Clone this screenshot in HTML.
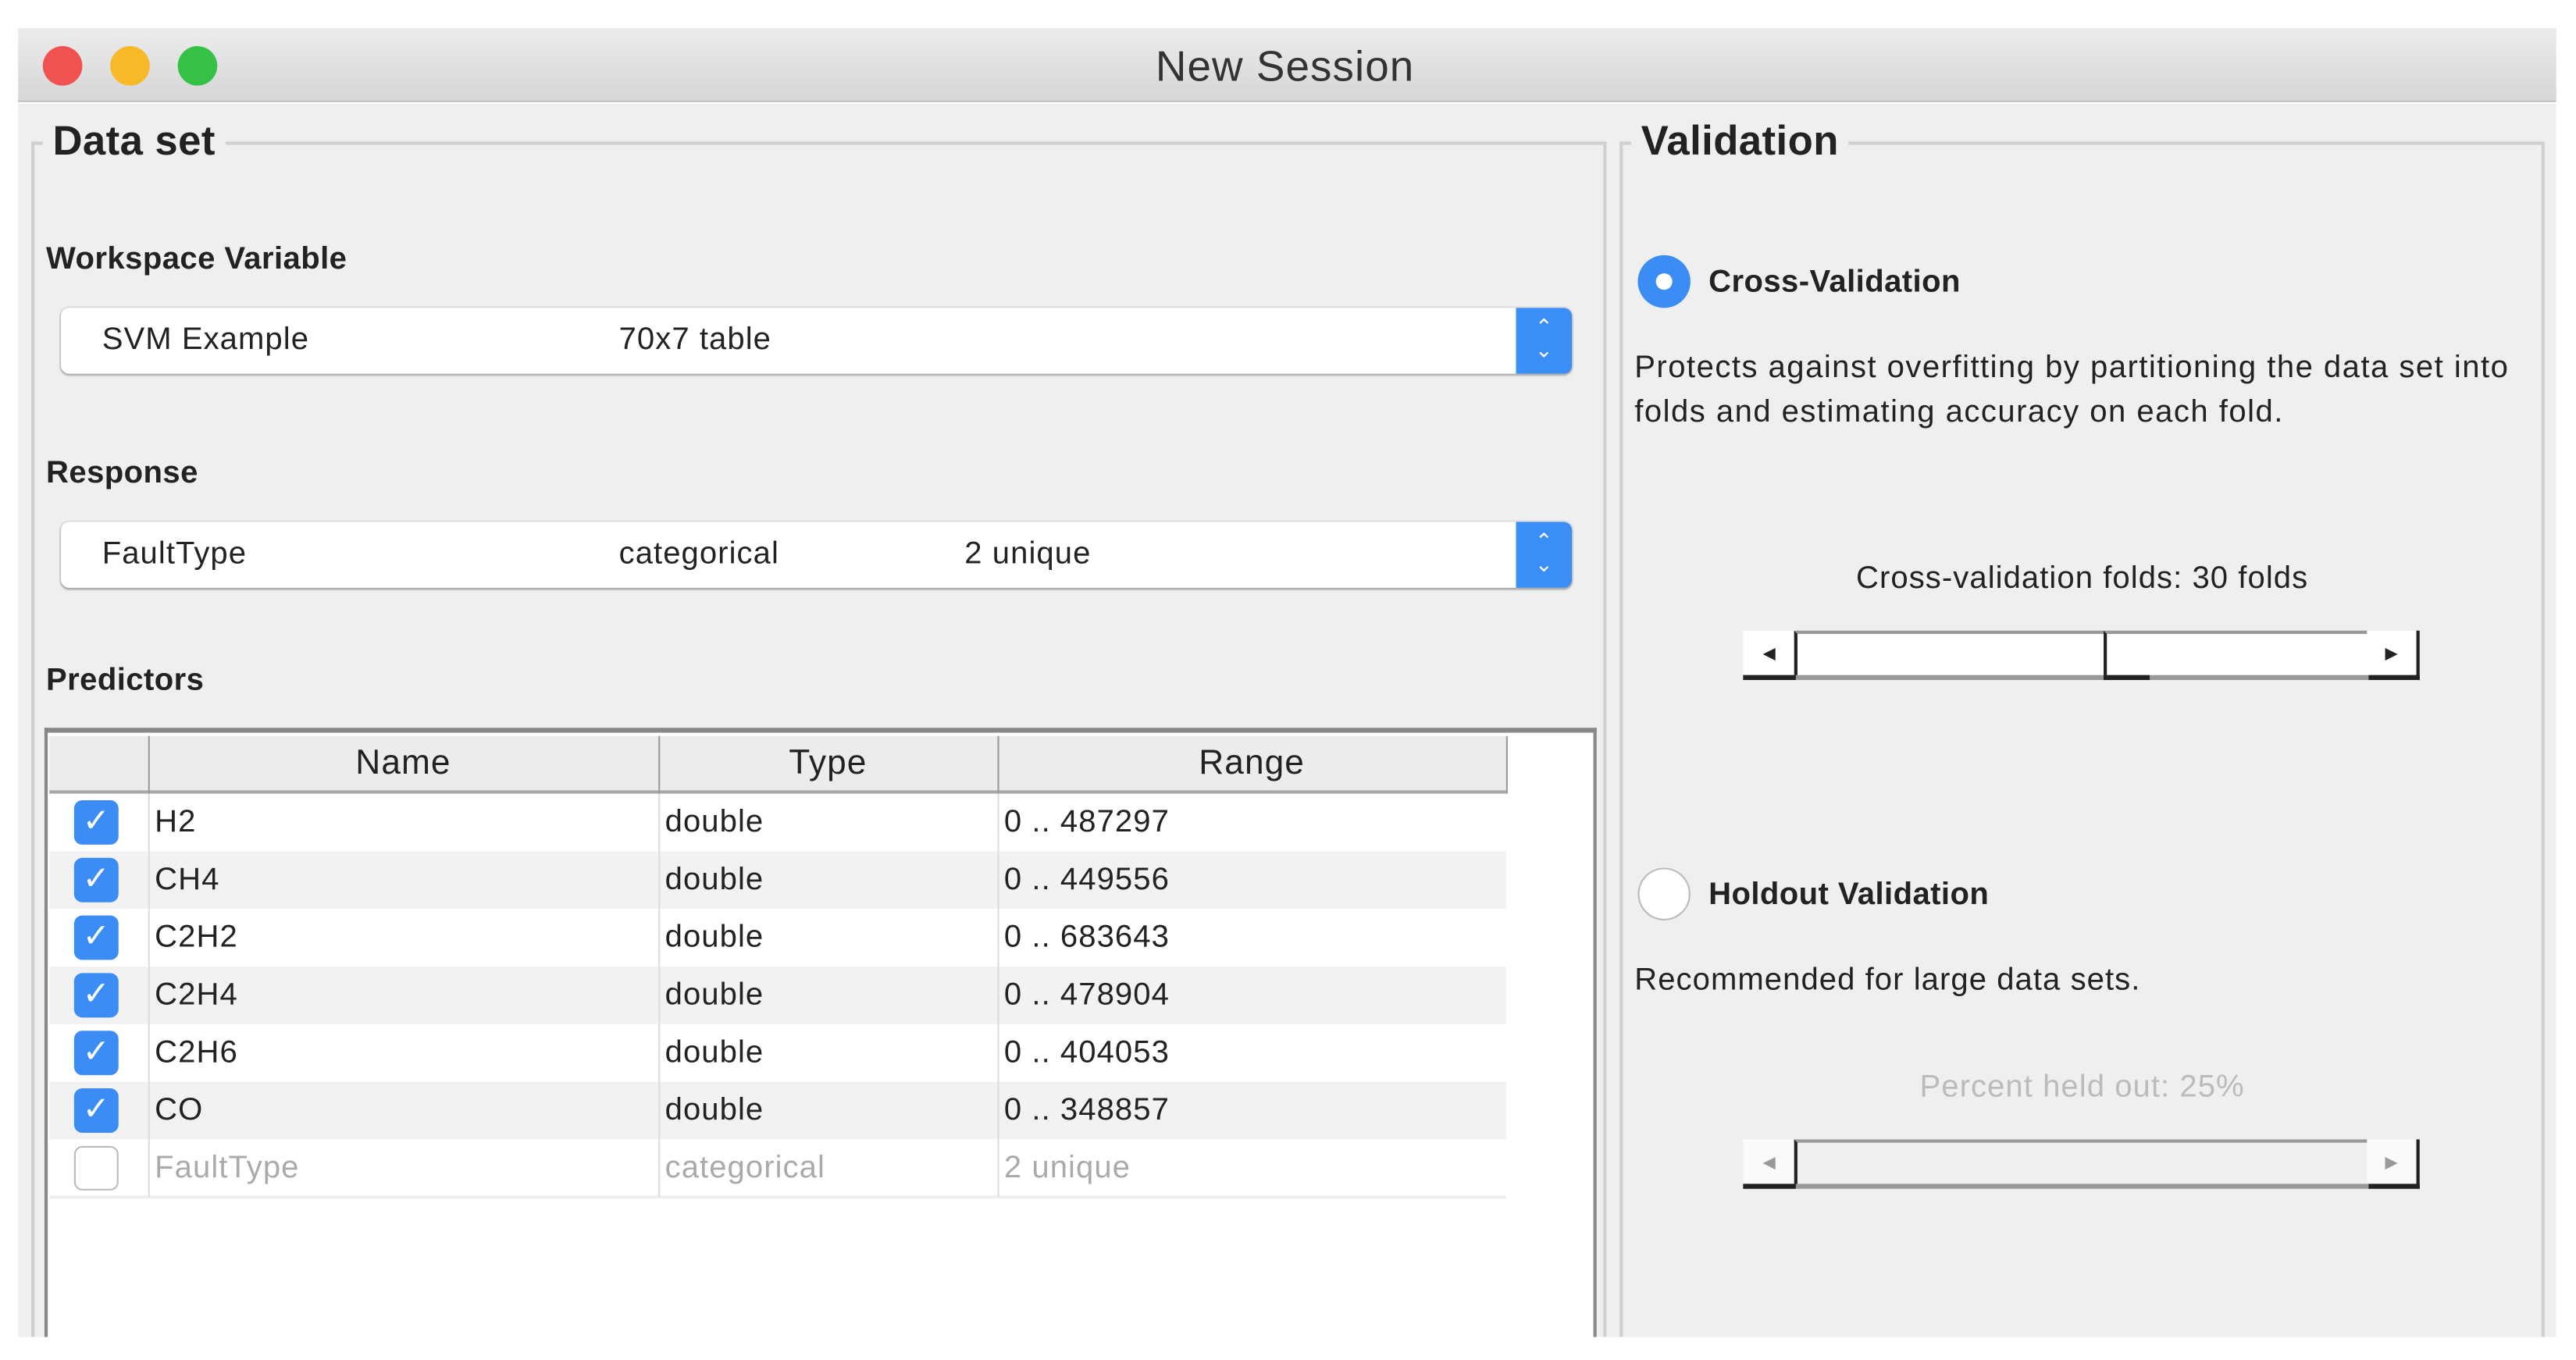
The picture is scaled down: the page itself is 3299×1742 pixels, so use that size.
<!DOCTYPE html>
<html><head><meta charset="utf-8"><style>
html,body{margin:0;padding:0;background:#fff;overflow:hidden;width:3299px;height:1742px}
#s{position:absolute;left:0;top:0;width:1565px;height:826px;overflow:hidden;transform:scale(2.108,2.109);transform-origin:0 0;font-family:"Liberation Sans",sans-serif;color:#222}
#s *{box-sizing:border-box}
.a{position:absolute}
.t{position:absolute;font-size:19px;white-space:nowrap;line-height:22px;letter-spacing:0.5px}
.b{font-weight:bold;letter-spacing:0.2px}
.dd{position:absolute;left:37px;width:918px;height:40px;background:#fff;border-radius:5px;box-shadow:0 1px 1px #aaa,0 0 0 1px #ddd}
.btn{position:absolute;right:0;top:0;width:34px;height:40px;background:#3a8ef6;border-radius:0 5px 5px 0;color:#fff;font-size:13px;text-align:center;line-height:12px}
.row{position:absolute;left:30px;width:885px;height:35px}
.cb{position:absolute;left:15px;top:4px;width:27px;height:27px;background:#3b8df5;border-radius:5px;color:#fff;font-size:20px;text-align:center;line-height:27px}
.cell{position:absolute;top:0;height:35px;border-left:1px solid #ddd;font-size:19px;line-height:35px;padding-left:3px;letter-spacing:0.5px}
.sl{position:absolute;left:1059px;width:411px;height:30px}
</style></head><body><div id="s">
<div class="a" style="left:11px;top:17px;width:1542px;height:45px;background:linear-gradient(#ececec,#d6d6d6);border-bottom:1px solid #bdbdbd"></div>
<div class="a" style="left:26px;top:28px;width:24px;height:24px;border-radius:50%;background:#f0524f"></div>
<div class="a" style="left:67px;top:28px;width:24px;height:24px;border-radius:50%;background:#f7b928"></div>
<div class="a" style="left:108px;top:28px;width:24px;height:24px;border-radius:50%;background:#35c046"></div>
<div class="t" style="left:702px;top:26px;font-size:26px;line-height:28px;color:#333">New Session</div>
<div class="a" style="left:11px;top:63px;width:1542px;height:749px;background:#efefef"></div>
<div class="a" style="left:19px;top:86px;width:957px;height:740px;border:2px solid #d0d0d0;border-bottom:none"></div>
<div class="t b" style="left:26px;top:72px;font-size:25px;line-height:28px;background:#efefef;padding:0 6px">Data set</div>
<div class="a" style="left:984px;top:86px;width:562px;height:740px;border:2px solid #d0d0d0;border-bottom:none"></div>
<div class="t b" style="left:991px;top:72px;font-size:25px;line-height:28px;background:#efefef;padding:0 6px">Validation</div>
<div class="t b" style="left:28px;top:147px">Workspace Variable</div>
<div class="dd" style="top:187px"><div class="t" style="left:25px;top:9px">SVM Example</div><div class="t" style="left:339px;top:9px">70x7 table</div><div class="btn"><div style="margin-top:6px">&#8963;</div><div style="margin-top:2px">&#8964;</div></div></div>
<div class="t b" style="left:28px;top:277px">Response</div>
<div class="dd" style="top:317px"><div class="t" style="left:25px;top:9px">FaultType</div><div class="t" style="left:339px;top:9px">categorical</div><div class="t" style="left:549px;top:9px">2 unique</div><div class="btn"><div style="margin-top:6px">&#8963;</div><div style="margin-top:2px">&#8964;</div></div></div>
<div class="t b" style="left:28px;top:403px">Predictors</div>
<div class="a" style="left:27px;top:442px;width:943px;height:384px;background:#fff;border:2px solid #888;border-bottom:none;border-top-width:3px"></div>
<div class="a" style="left:30px;top:447px;width:885px;height:36px;background:#ececec;border-bottom:3px solid #a8a8a8"></div>
<div class="a" style="left:90px;top:447px;width:1px;height:35px;background:#999"></div>
<div class="a" style="left:400px;top:447px;width:1px;height:35px;background:#999"></div>
<div class="a" style="left:606px;top:447px;width:1px;height:35px;background:#999"></div>
<div class="a" style="left:915px;top:447px;width:1px;height:35px;background:#999"></div>
<div class="t" style="left:90px;top:453px;width:310px;text-align:center;font-size:21px">Name</div>
<div class="t" style="left:400px;top:453px;width:206px;text-align:center;font-size:21px">Type</div>
<div class="t" style="left:606px;top:453px;width:309px;text-align:center;font-size:21px">Range</div>
<div class="row" style="top:482px;background:#fff"><div class="cb">&#10003;</div><div class="cell" style="left:60px">H2</div><div class="cell" style="left:370px">double</div><div class="cell" style="left:576px">0 .. 487297</div></div>
<div class="row" style="top:517px;background:#f2f2f2"><div class="cb">&#10003;</div><div class="cell" style="left:60px">CH4</div><div class="cell" style="left:370px">double</div><div class="cell" style="left:576px">0 .. 449556</div></div>
<div class="row" style="top:552px;background:#fff"><div class="cb">&#10003;</div><div class="cell" style="left:60px">C2H2</div><div class="cell" style="left:370px">double</div><div class="cell" style="left:576px">0 .. 683643</div></div>
<div class="row" style="top:587px;background:#f2f2f2"><div class="cb">&#10003;</div><div class="cell" style="left:60px">C2H4</div><div class="cell" style="left:370px">double</div><div class="cell" style="left:576px">0 .. 478904</div></div>
<div class="row" style="top:622px;background:#fff"><div class="cb">&#10003;</div><div class="cell" style="left:60px">C2H6</div><div class="cell" style="left:370px">double</div><div class="cell" style="left:576px">0 .. 404053</div></div>
<div class="row" style="top:657px;background:#f2f2f2"><div class="cb">&#10003;</div><div class="cell" style="left:60px">CO</div><div class="cell" style="left:370px">double</div><div class="cell" style="left:576px">0 .. 348857</div></div>
<div class="row" style="top:692px;height:36px;background:#fff;border-bottom:2px solid #eee;color:#aaa"><div class="cb" style="background:#fff;border:1px solid #bbb;width:27px;height:27px"></div><div class="cell" style="left:60px">FaultType</div><div class="cell" style="left:370px">categorical</div><div class="cell" style="left:576px">2 unique</div></div>
<div class="a" style="left:995px;top:155px;width:32px;height:32px;border-radius:50%;background:#3b8df5"></div>
<div class="a" style="left:1006px;top:166px;width:10px;height:10px;border-radius:50%;background:#fff"></div>
<div class="t b" style="left:1038px;top:161px">Cross-Validation</div>
<div class="t" style="left:993px;top:213px;letter-spacing:0.7px">Protects against overfitting by partitioning the data set into</div>
<div class="t" style="left:993px;top:240px;letter-spacing:0.7px">folds and estimating accuracy on each fold.</div>
<div class="t" style="left:1060px;top:341px;width:410px;text-align:center">Cross-validation folds: 30 folds</div>
<div class="sl" style="top:383px;background:#fff">
<div class="a" style="left:31px;top:0;width:188px;height:28px;border-top:2px solid #999;border-left:2px solid #222"></div>
<div class="a" style="left:219px;top:0;width:160px;height:28px;border-top:2px solid #999;border-left:2px solid #222"></div>
<div class="a" style="left:0;top:27px;width:411px;height:3px;background:#999"></div>
<div class="a" style="left:0;top:27px;width:32px;height:3px;background:#222"></div>
<div class="a" style="left:219px;top:27px;width:28px;height:3px;background:#222"></div>
<div class="a" style="left:380px;top:27px;width:31px;height:3px;background:#222"></div>
<div class="a" style="left:409px;top:0;width:2px;height:30px;background:#222"></div>
<div class="a" style="left:12px;top:9px;font-size:10px">&#9664;</div>
<div class="a" style="left:390px;top:9px;font-size:10px">&#9654;</div>
</div>
<div class="a" style="left:995px;top:527px;width:32px;height:32px;border-radius:50%;background:#fff;border:1px solid #bbb"></div>
<div class="t b" style="left:1038px;top:533px">Holdout Validation</div>
<div class="t" style="left:993px;top:585px">Recommended for large data sets.</div>
<div class="t" style="left:1060px;top:650px;width:410px;text-align:center;color:#bbb">Percent held out: 25%</div>
<div class="sl" style="top:692px;background:#fafafa">
<div class="a" style="left:31px;top:0;width:348px;height:28px;border-top:2px solid #999;border-left:2px solid #222;background:#f0f0f0"></div>
<div class="a" style="left:0;top:27px;width:411px;height:3px;background:#999"></div>
<div class="a" style="left:0;top:27px;width:32px;height:3px;background:#222"></div>
<div class="a" style="left:380px;top:27px;width:31px;height:3px;background:#222"></div>
<div class="a" style="left:409px;top:0;width:2px;height:30px;background:#222"></div>
<div class="a" style="left:12px;top:9px;font-size:10px;color:#999">&#9664;</div>
<div class="a" style="left:390px;top:9px;font-size:10px;color:#999">&#9654;</div>
</div>
<div class="a" style="left:0;top:812px;width:1565px;height:14px;background:#fff"></div>
</div></body></html>
